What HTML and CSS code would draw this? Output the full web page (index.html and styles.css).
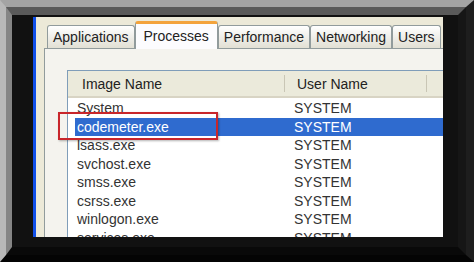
FILE: index.html
```html
<!DOCTYPE html>
<html lang="en">
  <head>
    <meta charset="UTF-8" />
    <meta name="viewport" content="width=device-width, initial-scale=1.0" />
    <title>Task Manager - Processes</title>

    <link rel="stylesheet" href="styles.css">
  </head>
  <body>
    <!-- Moldura chanfrada em volta da captura -->
    <div class="frame">
      <div class="bevel">
        <div class="window">
          <!-- Abas do gerenciador -->
          <div class="tabs">
            <div class="tab">Applications</div>
            <div class="tab active">Processes</div>
            <div class="tab">Performance</div>
            <div class="tab">Networking</div>
            <div class="tab">Users</div>
          </div>

          <div class="panel">
            <div class="listview">
              <div class="header">
                <div class="col col-name">Image Name</div>
                <div class="col col-user">User Name</div>
                <div class="col col-rest"></div>
              </div>

              <div class="rows">
                <div class="row"><span class="cell-name">System</span><span class="cell-user">SYSTEM</span></div>
                <div class="row selected"><span class="cell-name">codemeter.exe</span><span class="cell-user">SYSTEM</span></div>
                <div class="row"><span class="cell-name">lsass.exe</span><span class="cell-user">SYSTEM</span></div>
                <div class="row"><span class="cell-name">svchost.exe</span><span class="cell-user">SYSTEM</span></div>
                <div class="row"><span class="cell-name">smss.exe</span><span class="cell-user">SYSTEM</span></div>
                <div class="row"><span class="cell-name">csrss.exe</span><span class="cell-user">SYSTEM</span></div>
                <div class="row"><span class="cell-name">winlogon.exe</span><span class="cell-user">SYSTEM</span></div>
                <div class="row"><span class="cell-name">services.exe</span><span class="cell-user">SYSTEM</span></div>
              </div>

              <!-- Marcação vermelha sobre o processo -->
              <div class="highlight-box"></div>
            </div>
          </div>
        </div>
      </div>
    </div>
  </body>
</html>
```

FILE: styles.css
```css
/* Página do tamanho exato da captura */
body {
  margin: 0;
  width: 474px;
  height: 262px;
  overflow: hidden;
  background-color: #000;
  font-family: "Liberation Sans", Arial, sans-serif;
  font-size: 14px;
}

/* Moldura externa: duas camadas de borda simulam o degradê */
.frame {
  box-sizing: border-box;
  width: 474px;
  height: 262px;
  border-style: solid;
  border-width: 7px 8px 7px 6px;
  border-color: #a4a4a4 #1e1e1e #040404 #b8b8b8;
  display: flex;
}

.bevel {
  flex: 1;
  display: flex;
  border-style: solid;
  border-width: 8px 8px 8px 6px;
  border-color: #5a5a5a #161616 #090909 #858585;
  background-color: #111;
  padding: 2px 15px 10px 21px;
}

/* Janela do Windows XP */
.window {
  flex: 1;
  display: flex;
  flex-direction: column;
  overflow: hidden;
  border-left: 3px solid #1150ea;
  background-color: #ece9d8;
  padding: 4px 0 0 8px;
}

/* Linha de abas */
.tabs {
  display: flex;
  align-items: flex-end;
  height: 27px;
  padding-left: 3px;
}

.tab {
  box-sizing: border-box;
  height: 23px;
  padding: 3px 5px 0 5px;
  border: 1px solid #919b9c;
  border-bottom: none;
  border-radius: 3px 3px 0 0;
  background: linear-gradient(#ffffff, #ecebe5 60%, #e2e0d4);
  color: #222;
  white-space: nowrap;
}

.tab.active {
  position: relative;
  height: 28px;
  margin-bottom: -1px;
  padding: 4px 8px 0 8px;
  border-top: 3px solid #f3a33c;
  background: #fcfcfe;
}

/* Painel da aba */
.panel {
  flex: 1;
  margin-right: -30px;
  border: 1px solid #919b9c;
  background-color: #f4f3ee;
  padding: 21px 0 0 22px;
}

/* Lista de processos */
.listview {
  position: relative;
  height: 100%;
  border: 1px solid #7f9db9;
  border-right: none;
  border-bottom: none;
  background-color: #fff;
  color: #333;
}

.header {
  display: flex;
  height: 27px;
  box-sizing: border-box;
  border-bottom: 2px solid #d8d4c4;
  background-color: #ebeadb;
  color: #222;
}

.col {
  box-sizing: border-box;
  line-height: 27px;
  background: linear-gradient(#c9c6b5, #c9c6b5) right 4px / 1px 17px no-repeat;
}

.col-name {
  width: 217px;
  padding-left: 14px;
}

.col-user {
  width: 142px;
  padding-left: 12px;
}

.col-rest {
  flex: 1;
  background: none;
}

.rows {
  padding-top: 1px;
}

.row {
  display: flex;
  height: 18.5px;
  line-height: 18.5px;
  margin-left: 7px;
}

.cell-name {
  width: 210px;
  padding-left: 2px;
}

.cell-user {
  padding-left: 7px;
}

.row.selected {
  background-color: #2f6bcf;
  color: #fff;
}

.highlight-box {
  position: absolute;
  left: -10px;
  top: 41px;
  width: 160px;
  height: 28px;
  box-sizing: border-box;
  border: 2px solid #c8262b;
  box-shadow: 1px 1px 2px rgba(0, 0, 0, 0.3);
}
```
